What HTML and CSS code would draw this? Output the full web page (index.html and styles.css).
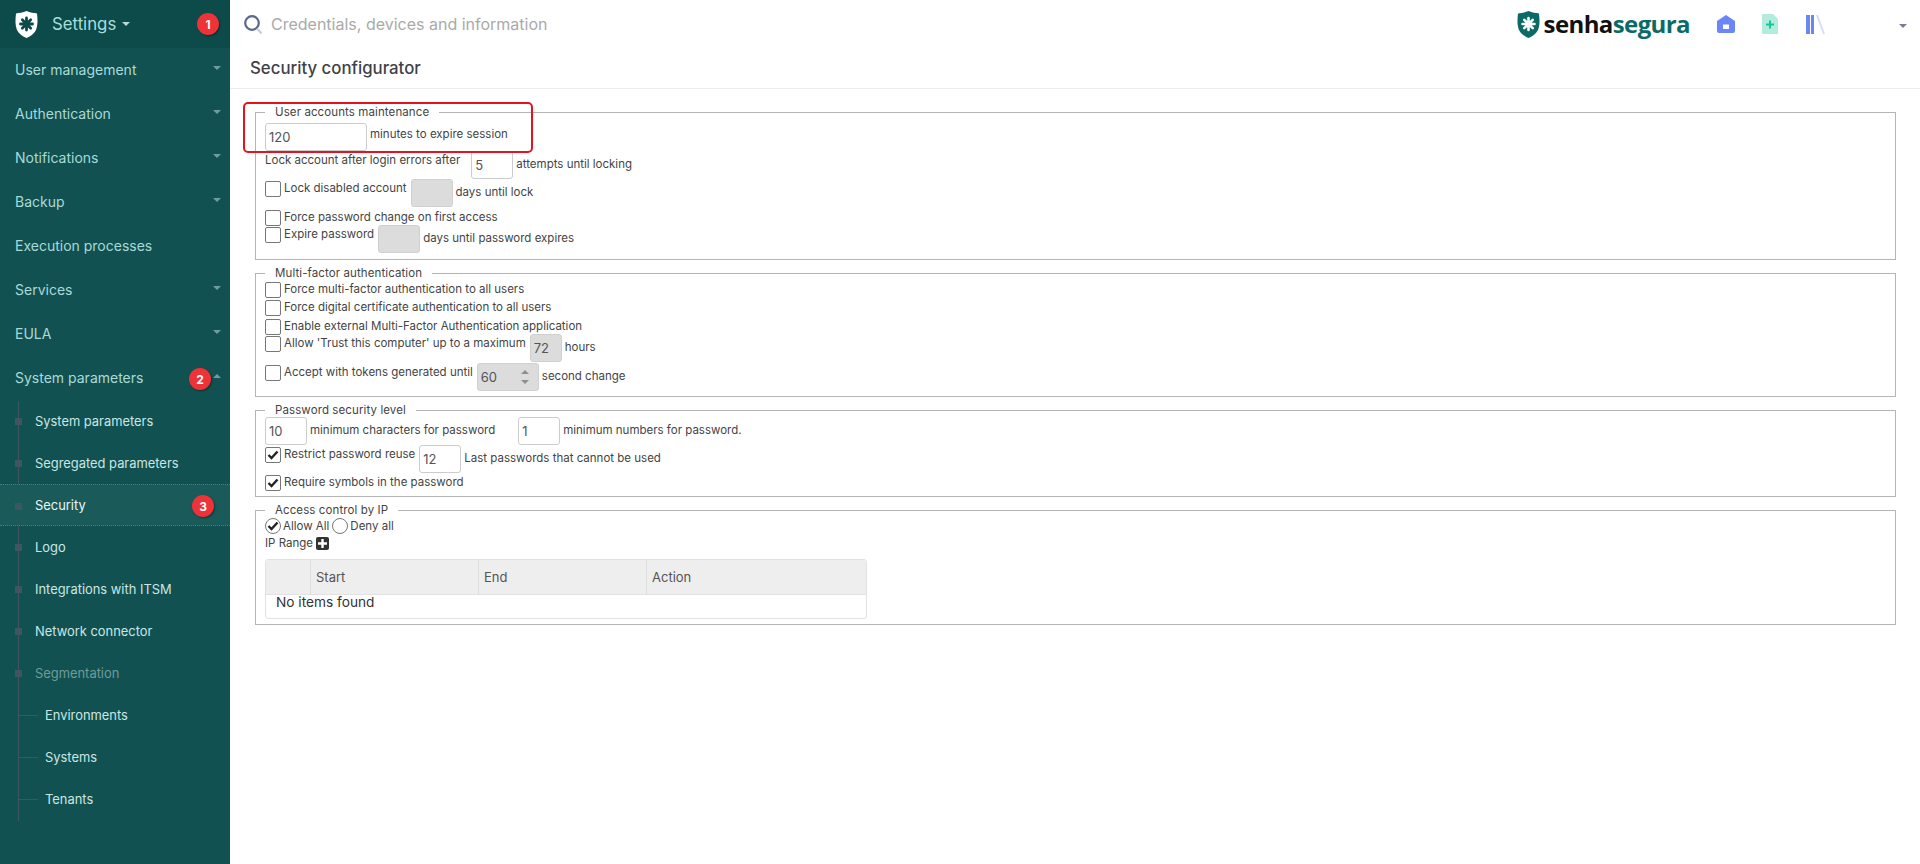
FILE: index.html
```html
<!DOCTYPE html>
<html lang="en">
<head>
<meta charset="utf-8">
<title>Security configurator</title>
<link rel="stylesheet" href="styles.css">
</head>
<body>
<div class="app">
  <aside class="sidebar">
    <div class="brand">
      <svg class="brand-icon" width="23" height="27" viewBox="0 0 23 27"><path d="M11.500 0C8 1.500 4 2 1 2.500C0.300 9 0 14 2 19C4 23 8 25.500 11.500 27C15 25.500 19 23 21 19C23 14 22.700 9 22 2.500C19 2 15 1.500 11.500 0Z" fill="#fff"/><g stroke="#0d4b4b" stroke-width="2.800" stroke-linecap="round"><path d="M11.500 7V19M5.500 13H17.500M7.300 8.800L15.700 17.200M15.700 8.800L7.300 17.200"/></g></svg>
      <span class="brand-name">Settings</span><span class="caret brand-caret"></span>
    </div>
    <nav>
      <a class="item">User management<span class="caret"></span></a>
      <a class="item">Authentication<span class="caret"></span></a>
      <a class="item">Notifications<span class="caret"></span></a>
      <a class="item">Backup<span class="caret"></span></a>
      <a class="item">Execution processes</a>
      <a class="item">Services<span class="caret"></span></a>
      <a class="item">EULA<span class="caret"></span></a>
      <a class="item">System parameters<span class="caret up"></span></a>
      <div class="tree">
        <a class="sub">System parameters</a>
        <a class="sub">Segregated parameters</a>
        <a class="sub active">Security</a>
        <a class="sub">Logo</a>
        <a class="sub">Integrations with ITSM</a>
        <a class="sub">Network connector</a>
        <a class="sub muted">Segmentation</a>
        <a class="leaf">Environments</a>
        <a class="leaf">Systems</a>
        <a class="leaf">Tenants</a>
      </div>
    </nav>
    <span class="badge b1">1</span>
    <span class="badge b2">2</span>
    <span class="badge b3">3</span>
  </aside>
  <main class="main">
    <header class="topbar">
      <svg class="search-icon" width="20" height="21" viewBox="0 0 20 21"><circle cx="9" cy="9" r="6.800" fill="none" stroke="#5b678c" stroke-width="2.200"/><path d="M14 14.500L18.500 19.500" stroke="#c9cede" stroke-width="2.200"/></svg>
      <span class="search-text">Credentials, devices and information</span>
      <div class="logo">
        <svg width="23" height="27" viewBox="0 0 23 27"><path d="M11.500 0C8 1.500 4 2 1 2.500C0.300 9 0 14 2 19C4 23 8 25.500 11.500 27C15 25.500 19 23 21 19C23 14 22.700 9 22 2.500C19 2 15 1.500 11.500 0Z" fill="#0b6a66"/><g stroke="#fff" stroke-width="2.600" stroke-linecap="round"><path d="M11.500 7V19M5.500 13H17.500M7.300 8.800L15.700 17.200M15.700 8.800L7.300 17.200"/></g></svg>
        <span class="logo-a">senha</span><span class="logo-b">segura</span>
      </div>
      <svg class="tool home" width="18" height="18" viewBox="0 0 18 18"><path d="M9 0L18 6V16A2 2 0 0 1 16 18H2A2 2 0 0 1 0 16V6Z" fill="#6c86f5"/><rect x="6" y="9.500" width="6" height="4.500" fill="#fff"/></svg>
      <svg class="tool file" width="16" height="20" viewBox="0 0 16 20"><path d="M0 0H11L16 5V20H0Z" fill="#b3ecdc"/><path d="M8 6.500V14.500M4 10.500H12" stroke="#12c79a" stroke-width="2"/></svg>
      <svg class="tool lib" width="19" height="19" viewBox="0 0 19 19"><rect width="4" height="19" fill="#6c86f5"/><rect x="5" width="3" height="19" fill="#6c86f5"/><path d="M10 0H12L19 19H17Z" fill="#d5dcfb"/></svg>
      <span class="user-caret"></span>
    </header>
    <div class="pagehead"><h1>Security configurator</h1></div>
    <section class="content">
      <fieldset class="box first-box">
        <legend>User accounts maintenance</legend>
        <div class="row h28"><input class="field wide" value="120"><span class="unit first">minutes to expire session</span></div>
        <div class="row h28"><span class="label plain">Lock account after login errors after</span><input class="field gap-l" value="5"><span class="unit">attempts until locking</span></div>
        <div class="row h29"><span class="check"></span><span class="label">Lock disabled account</span><input class="field off gap-m" disabled><span class="unit">days until lock</span></div>
        <div class="row h17"><span class="check"></span><span class="label">Force password change on first access</span></div>
        <div class="row h29"><span class="check"></span><span class="label">Expire password</span><input class="field off gap-m" disabled><span class="unit">days until password expires</span></div>
      </fieldset>
      <fieldset class="box">
        <legend>Multi-factor authentication</legend>
        <div class="row h18"><span class="check"></span><span class="label">Force multi-factor authentication to all users</span></div>
        <div class="row h19"><span class="check"></span><span class="label">Force digital certificate authentication to all users</span></div>
        <div class="row h17"><span class="check"></span><span class="label">Enable external Multi-Factor Authentication application</span></div>
        <div class="row h29"><span class="check"></span><span class="label">Allow 'Trust this computer' up to a maximum</span><input class="field off narrow gap-m" value="72" disabled><span class="unit">hours</span></div>
        <div class="row h28"><span class="check"></span><span class="label">Accept with tokens generated until</span>
          <span class="spin gap-m">60<svg width="8" height="14" viewBox="0 0 8 14"><path d="M4 0L8 4H0ZM4 14L0 10H8Z" fill="#8f8f8f"/></svg></span>
          <span class="unit">second change</span></div>
      </fieldset>
      <fieldset class="box">
        <legend>Password security level</legend>
        <div class="row h28"><input class="field" value="10"><span class="unit">minimum characters for password</span><input class="field gap-x" value="1"><span class="unit">minimum numbers for password.</span></div>
        <div class="row h28"><span class="check on"><svg width="12" height="10" viewBox="0 0 12 10"><path d="M1.500 5L4.500 8L10.500 1.500" fill="none" stroke="#222" stroke-width="2.400"/></svg></span><span class="label">Restrict password reuse</span><input class="field gap-m" value="12"><span class="unit">Last passwords that cannot be used</span></div>
        <div class="row h18"><span class="check on"><svg width="12" height="10" viewBox="0 0 12 10"><path d="M1.500 5L4.500 8L10.500 1.500" fill="none" stroke="#222" stroke-width="2.400"/></svg></span><span class="label">Require symbols in the password</span></div>
      </fieldset>
      <fieldset class="box">
        <legend>Access control by IP</legend>
        <div class="radios">
          <span class="radio"><svg width="12" height="10" viewBox="0 0 12 10"><path d="M1.500 5L4.500 8L10.500 1.500" fill="none" stroke="#222" stroke-width="2.400"/></svg></span><span class="radio-label">Allow All</span>
          <span class="radio"></span><span class="radio-label">Deny all</span>
        </div>
        <div class="range">IP Range <span class="plus"><svg width="9" height="9" viewBox="0 0 9 9"><path d="M4.500 0V9M0 4.500H9" stroke="#fff" stroke-width="2.400"/></svg></span></div>
        <div class="table">
          <div class="thead"><span class="th c0"></span><span class="th c1">Start</span><span class="th c2">End</span><span class="th c3">Action</span></div>
          <div class="tbody">No items found</div>
        </div>
      </fieldset>
      <div class="callout"></div>
    </section>
  </main>
</div>
</body>
</html>
```
FILE: styles.css
```css
* { box-sizing: border-box; }
html, body { margin: 0; height: 100%; background: #fff; overflow: hidden; }
body { font-family: Inter, "Open Sans", sans-serif; color: #444; }
.app { display: flex; height: 864px; }

.sidebar { position: relative; width: 230px; flex: none; background: #125151; color: #a8dad7; }
.brand { height: 48px; background: #0d4b4b; display: flex; align-items: center; padding-left: 15px; }
.brand-icon { flex: none; }
.brand-name { margin-left: 14px; font-size: 16.800px; color: #a9dedb; }
.caret { width: 0; height: 0; border-left: 4.500px solid transparent; border-right: 4.500px solid transparent; border-top: 4px solid #6f9c9c; margin-left: auto; margin-top: -3px; }
.caret.up { border-top: 0; border-bottom: 4px solid #6f9c9c; }
.brand-caret { border-top-color: #b9d8d6; margin: 0 0 0 6px; }
.item { height: 44px; display: flex; align-items: center; padding: 0 9px 2px 15px; font-size: 14px; }
.tree { position: relative; }
.tree::before { content: ""; position: absolute; left: 18px; top: 1px; height: 420px; width: 1px; background: #3f5661; }
.sub, .leaf { position: relative; height: 42px; display: flex; align-items: center; font-size: 12.900px; color: #c9e6e3; }
.sub { padding-left: 35px; }
.sub::before { content: ""; position: absolute; left: 15px; top: 18px; width: 7px; height: 7px; background: #3f5661; }
.leaf { padding-left: 45px; }
.leaf::before { content: ""; position: absolute; left: 18px; top: 21px; width: 20px; height: 1px; background: #3f5661; }
.sub.active { color: #eaf6f5; background: #1a5a58; border-top: 1px dotted #4d7d7b; border-bottom: 1px dotted #4d7d7b; }
.sub.muted { color: #6f9b99; }
.badge { position: absolute; width: 22px; height: 22px; border-radius: 50%; background: #ee3338; color: #fff; font-size: 12px; font-weight: 700; display: flex; align-items: center; justify-content: center; box-shadow: 1px 1px 2px rgba(0,0,0,.4); }
.b1 { left: 197px; top: 13px; }
.b2 { left: 189px; top: 368px; }
.b3 { left: 192px; top: 495px; }

.main { flex: 1; min-width: 0; }
.topbar { height: 48px; display: flex; align-items: center; padding-left: 13px; }
.search-icon { flex: none; }
.search-text { margin-left: 8px; font-size: 16px; color: #aaa; }
.logo { margin-left: auto; display: flex; align-items: center; gap: 4px; }
.logo-a, .logo-b { font-family: "Open Sans", sans-serif; font-weight: 700; font-size: 24px; letter-spacing: -.6px; line-height: 28px; }
.logo-a { color: #111; }
.logo-b { color: #0b6a66; margin-left: -4px; }
.tool { flex: none; }
.home { margin-left: 27px; }
.file { margin-left: 27px; }
.lib { margin-left: 28px; }
.user-caret { width: 0; height: 0; border-left: 4.500px solid transparent; border-right: 4.500px solid transparent; border-top: 4px solid #7b7b9e; margin: 3px 13px 0 74px; }

.pagehead { height: 41px; border-bottom: 1px solid #ececec; padding-left: 20px; }
h1 { margin: 0; font-size: 16.800px; font-weight: 500; line-height: 41px; color: #3f4249; }

.content { position: relative; padding: 16px 24px 0 25px; font-size: 11.500px; }
.box { margin: 0 0 6px; padding: 0 9px 5px; border: 1px solid #b5b5b5; min-width: 0; }
.first-box { padding-top: 4px; }
.box legend { margin-left: 0; padding: 0 10px; font-size: 11.500px; letter-spacing: .1px; line-height: 14px; color: #444; }
.row { display: flex; align-items: flex-start; }
.h17 { height: 17px; } .h18 { height: 18px; } .h19 { height: 19px; } .h28 { height: 28px; } .h29 { height: 29px; }
.label { margin-top: 2px; line-height: 14px; }
.unit { margin: 6px 0 0 3px; line-height: 14px; }
.unit.first { margin-top: 4px; }
.field { width: 42px; height: 28px; margin: 0; padding: 2px 3px; border: 1px solid #ccc; border-radius: 3px; background: #fff; font: 13px Inter, sans-serif; color: #555; }
.field.wide { width: 102px; }
.field.narrow { width: 32px; }
.field.off { background: #dcdcdc; border-color: #d0d0d0; }
.gap-l { margin-left: 11px; }
.gap-m { margin-left: 4px; }
.gap-x { margin-left: 23px; }
.check { flex: none; width: 16px; height: 16px; margin: 2px 3px 0 0; border: 1px solid #777; border-radius: 2px; background: #fff; display: flex; align-items: center; justify-content: center; }
.spin { width: 62px; height: 28px; border: 1px solid #d0d0d0; border-radius: 3px; background: #dcdcdc; display: flex; align-items: center; justify-content: space-between; padding: 0 9px 0 3px; font-size: 13px; color: #555; }

.radios { display: flex; align-items: center; height: 18px; }
.radio { width: 16px; height: 16px; border: 1px solid #777; border-radius: 50%; display: flex; align-items: center; justify-content: center; }
.radio-label { margin: 0 3px 0 2px; }
.range { display: flex; align-items: center; gap: 3px; height: 16px; margin-bottom: 8px; }
.plus { width: 13px; height: 13px; border-radius: 2px; background: #333; display: flex; align-items: center; justify-content: center; }
.table { width: 602px; height: 60px; border: 1px solid #e2e2e2; border-radius: 3px; overflow: hidden; font-size: 13px; }
.thead { height: 35px; display: flex; background: #eee; border-bottom: 1px solid #e2e2e2; }
.th { border-right: 1px solid #dedede; padding-left: 5px; line-height: 34px; color: #555; }
.th:last-child { border-right: 0; }
.c0 { width: 45px; } .c1 { width: 168px; } .c2 { width: 168px; } .c3 { flex: 1; }
.tbody { padding: 0 0 0 10px; font-size: 13.700px; line-height: 15px; color: #333; }

.callout { position: absolute; left: 13px; top: 13px; width: 290px; height: 51px; border: 2px solid #e3141e; border-radius: 5px; }
```
